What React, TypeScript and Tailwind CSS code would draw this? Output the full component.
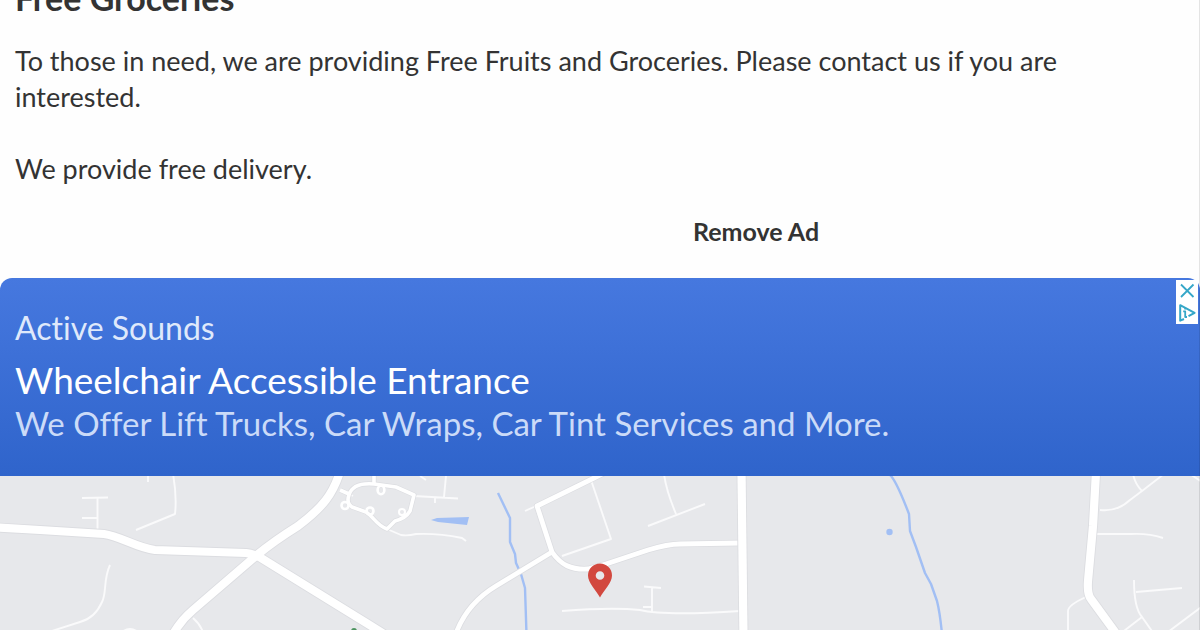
import React from "react";

function AdBadge() {
  return (
    <div className="absolute top-[2px] right-[2px] flex w-[22px] flex-col bg-white text-[#35a7c8]">
      <button type="button" aria-label="Close ad" className="h-[22px] w-[22px]">
        <svg viewBox="0 0 22 22" className="h-[22px] w-[22px]" fill="none" stroke="currentColor" strokeWidth="1.8">
          <path d="M5 4.500L17.500 17M17.500 4.500L5 17" />
        </svg>
      </button>
      <a href="#ad-choices" aria-label="Ad choices" className="block h-[22px] w-[22px]">
        <svg viewBox="0 0 22 22" className="h-[22px] w-[22px]" fill="none" stroke="currentColor" strokeWidth="2" strokeLinejoin="round">
          <path d="M8 17L4.2 18.6V3.2L18.6 10.8L12.5 14.2" />
          <path d="M7.2 9.3H9.2V15H11M9.2 5.8V7.6" strokeWidth="1.8" />
        </svg>
      </a>
    </div>
  );
}

const mainRoads = [
  "M-4 51.5L40 54L104 58C120 60 137 72 155 74L246 77Q254 78 261 82L368 148L384 158",
  "M341 -8C334 18 322 32 298 50Q274 65 257 79L193 134Q180 145 172 160",
  "M741.5 -4L743.5 160",
  "M1096 -4L1093 50L1088 105Q1087 118 1091 123L1118 160",
];

const mediumRoads = [
  "M606 -4L594 2L537 30L552 76C561 89 571 94 588 93L606 88L648 74Q668 68 680 68L740 67",
  "M552 76L496 110Q466 128 455 160",
];

const loopRoads = [
  "M349 19C352 9 362 7 374 8L396 11L414 19L410 35Q406 42 395 45L387 53C376 49 374 41 366 36L352 31Q346 27 349 19Z",
  "M374 -2V8M340 14L349 18",
];

const minorRoads = [
  "M82 22L108 21.5M97.5 22V54M82 42H97",
  "M148 -2V6M173 -2Q177 20 175 38L136 54",
  "M110 89C103 104 107 116 102 126Q95 142 80 146L52 155M122 156Q130 150 138 156",
  "M193 142Q200 148 203 156",
  "M387 53L401 59Q408 60 416 58Q438 57 462 62L466 65",
  "M414 20L458 22.5M446 0L444 21M435 21V27M420 0L426 4M349 18L353 20",
  "M525 35L536 30M591 4L611 63L562 80",
  "M664 -2Q666 14 676 38M648 50L705 28",
  "M562 135Q612 131 640 134Q665 140 740 135M652 136V111M644 110.5L661 112M643 131H652",
  "M1100 34Q1117 36 1130 24L1142 15L1164 -2M1133 -2Q1135 8 1142 15",
  "M1097 58L1131 58Q1148 57 1163 62",
  "M1086 121Q1068 129 1068 135V158",
  "M1134 104Q1134 132 1142 141L1154 158M1136 116L1182 112M1142 141L1120 158M1168 156L1204 129M1190 -2L1202 6",
];

function Roads({ paths, edge, width }: { paths: string[]; edge: number; width: number }) {
  return (
    <>
      {paths.map((d) => (
        <path key={`${d}-edge`} d={d} stroke="#dcdde1" strokeWidth={edge} />
      ))}
      {paths.map((d) => (
        <path key={d} d={d} stroke="#ffffff" strokeWidth={width} />
      ))}
    </>
  );
}

function LocationMap() {
  return (
    <svg viewBox="0 0 1200 154" role="img" aria-label="Map" className="block w-full bg-[#e7e8eb]" fill="none" strokeLinejoin="round">
      <g stroke="#fafafb" strokeWidth="1.9">
        {minorRoads.map((d) => (
          <path key={d} d={d} />
        ))}
      </g>
      <g stroke="#a2bff4" strokeWidth="2.4">
        <path d="M498 17L510 42V66L515 78L516 87L521 98L525 112L526.5 158" />
        <path d="M890 -1Q896 4 909 38L910 55L916 71L925 97L931 108L937 125Q940 137 942 158" />
      </g>
      <path d="M431 44L437 42L469 41L467 49L438 46Z" fill="#a2bff4" />
      <circle cx="889.5" cy="56" r="3.2" fill="#a2bff4" />
      <Roads paths={loopRoads} edge={5} width={3.6} />
      <g stroke="#ffffff" strokeWidth="2.6">
        <ellipse cx="381" cy="14" rx="3.4" ry="4.2" />
        <circle cx="345" cy="29.5" r="3.5" />
        <circle cx="370" cy="35" r="3.5" />
        <circle cx="402" cy="36" r="3" strokeWidth="2" />
      </g>
      <Roads paths={mediumRoads} edge={6.4} width={4.8} />
      <Roads paths={mainRoads} edge={10} width={8.2} />
      <circle cx="354" cy="155" r="3" fill="#4d9360" />
      <path
        fillRule="evenodd"
        d="M600 121.500C596 114 588 107 588 99.500A12 12 0 0 1 612 99.500C612 107 604 114 600 121.500ZM600 95.200A4.3 4.3 0 1 0 600 103.800A4.3 4.3 0 1 0 600 95.200Z"
        fill="#d2483f"
      />
    </svg>
  );
}

export default function App() {
  return (
    <div className="relative overflow-hidden bg-[#fefefe] font-['Lato',sans-serif] text-[#333333] [font-variant-ligatures:none]">
      <main className="px-[15px]">
        <h1 className="-mt-5 text-[34px] leading-9 font-bold">Free Groceries</h1>
        <div className="mt-[27px] text-[27px] leading-9">
          <p>
            To those in need, we are providing Free Fruits and Groceries. Please contact us if you are interested.
          </p>
          <p className="mt-9">We provide free delivery.</p>
        </div>
      </main>
      <div className="mt-[26px] mb-[29px] flex justify-center pl-[312px]">
        <button type="button" className="text-[25px] leading-9 font-bold">
          Remove Ad
        </button>
      </div>
      <section aria-label="Advertisement" className="relative rounded-t-xl bg-linear-to-b from-[#4678df] to-[#2f64cb] px-[15px] pt-8 pb-[33px]">
        <p className="text-[32px] leading-9 text-[#dfe9fb]">Active Sounds</p>
        <h2 className="mt-[10px] text-[37px] leading-[48px] text-white">Wheelchair Accessible Entrance</h2>
        <p className="text-[33px] leading-[39px] text-[#cbdbf8]">
          We Offer Lift Trucks, Car Wraps, Car Tint Services and More.
        </p>
        <AdBadge />
      </section>
      <LocationMap />
      <div className="absolute inset-y-0 right-0 w-px bg-black/10" />
    </div>
  );
}
